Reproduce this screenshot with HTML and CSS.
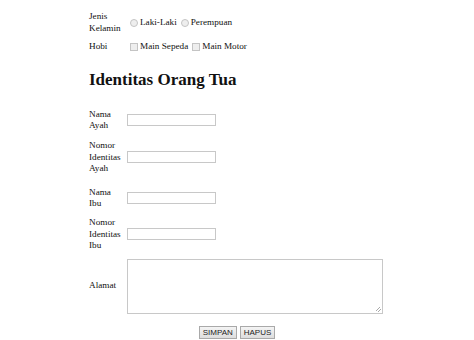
FILE: index.html
```html
<!DOCTYPE html>
<html>
<head>
<meta charset="utf-8">
<link rel="stylesheet" href="styles.css">
</head>
<body>
<form class="form">
  <div class="row r-gender">
    <div class="lbl">Jenis<br>Kelamin</div>
    <div class="field">
      <label class="opt"><span class="radio"></span>Laki-Laki</label>
      <label class="opt"><span class="radio"></span>Perempuan</label>
    </div>
  </div>
  <div class="row r-hobi">
    <div class="lbl">Hobi</div>
    <div class="field">
      <label class="opt"><span class="check"></span>Main Sepeda</label>
      <label class="opt"><span class="check"></span>Main Motor</label>
    </div>
  </div>
  <h2 class="title">Identitas Orang Tua</h2>
  <div class="row r-ayah">
    <div class="lbl">Nama<br>Ayah</div>
    <div class="field"><span class="input"></span></div>
  </div>
  <div class="row r-idayah">
    <div class="lbl">Nomor<br>Identitas<br>Ayah</div>
    <div class="field"><span class="input"></span></div>
  </div>
  <div class="row r-ibu">
    <div class="lbl">Nama<br>Ibu</div>
    <div class="field"><span class="input"></span></div>
  </div>
  <div class="row r-idibu">
    <div class="lbl">Nomor<br>Identitas<br>Ibu</div>
    <div class="field"><span class="input"></span></div>
  </div>
  <div class="row r-alamat">
    <div class="lbl">Alamat</div>
    <div class="field"><span class="textarea"><span class="grip"></span></span></div>
  </div>
  <div class="buttons">
    <span class="btn">SIMPAN</span>
    <span class="btn">HAPUS</span>
  </div>
</form>
</body>
</html>
```
FILE: styles.css
```css
html, body {
  margin: 0;
  padding: 0;
  background: #ffffff;
}

.form {
  width: 296px;
  margin: 0 auto;
  padding-top: 11px;
  font-family: "Liberation Serif", "Times New Roman", serif;
  font-size: 9.2px;
  line-height: 11.6px;
  color: #111;
}

.row {
  display: flex;
  align-items: center;
}

.lbl {
  width: 38px;
  flex: none;
}

.field {
  display: flex;
  align-items: center;
}

.opt {
  display: flex;
  align-items: center;
  margin-right: 1px;
}

.radio {
  width: 6px;
  height: 6px;
  border: 1px solid #c4c4c4;
  border-radius: 50%;
  background: #eeeeee;
  margin: 0 2px 0 3px;
}

.check {
  width: 6px;
  height: 6px;
  border: 1px solid #c4c4c4;
  background: #eeeeee;
  margin: 0 2px 0 3px;
}

.r-hobi {
  margin-top: 7px;
}

.title {
  margin: 17px 0 0 0;
  font-size: 17px;
  line-height: 20px;
  font-weight: bold;
  color: #111;
}

.r-ayah { margin-top: 19px; }
.r-idayah { margin-top: 8px; }
.r-ibu { margin-top: 12px; }
.r-idibu { margin-top: 7px; }
.r-alamat { margin-top: 7px; }

.input {
  display: block;
  width: 87px;
  height: 10px;
  border: 1px solid #c8c8c8;
  background: #fff;
}

.textarea {
  display: block;
  position: relative;
  width: 254px;
  height: 53px;
  border: 1px solid #c8c8c8;
  background: #fff;
}

.grip {
  position: absolute;
  right: 1px;
  bottom: 1px;
  width: 5px;
  height: 5px;
  background: linear-gradient(135deg, transparent 40%, #aaa 40%, #aaa 50%, transparent 50%, transparent 70%, #aaa 70%, #aaa 80%, transparent 80%);
}

.buttons {
  display: flex;
  justify-content: center;
  gap: 3px;
  margin-top: 12px;
}

.btn {
  display: block;
  box-sizing: border-box;
  height: 13px;
  padding: 0 3px;
  border: 1px solid #a9a9a9;
  background: linear-gradient(#f4f4f4, #dddddd);
  font-family: "Liberation Sans", Arial, sans-serif;
  font-size: 8px;
  line-height: 11px;
  color: #222;
}
```
